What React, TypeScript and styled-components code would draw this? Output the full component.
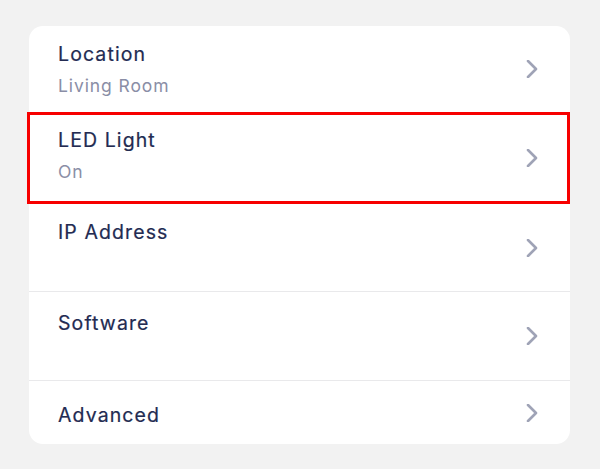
import React from "react";
import styled, { createGlobalStyle, css } from "styled-components";

const GlobalStyle = createGlobalStyle`
  html, body {
    margin: 0;
    padding: 0;
    background: #f2f2f2;
    font-family: "Inter", "Liberation Sans", sans-serif;
  }
  * { box-sizing: border-box; }
`;

const Page = styled.div`
  width: 600px;
  height: 469px;
  padding: 26px 30px 25px 29px;
`;

const Card = styled.div`
  background: #ffffff;
  border-radius: 14px;
  display: flex;
  flex-direction: column;
  height: 418px;
`;

const Row = styled.div<{ $h: number; $pt: number; $divider?: boolean; $highlight?: boolean }>`
  position: relative;
  height: ${(p) => p.$h}px;
  display: flex;
  align-items: center;
  padding: 0 32px 0 29px;
  ${(p) =>
    p.$divider &&
    css`
      border-bottom: 1px solid #e9e9eb;
    `}
  ${(p) =>
    p.$highlight &&
    css`
      &::after {
        content: "";
        position: absolute;
        top: 0;
        bottom: 0;
        left: -2px;
        right: 0;
        border: 3px solid #f70000;
        pointer-events: none;
      }
    `}
  & > div:first-child {
    padding-top: ${(p) => p.$pt}px;
  }
`;

const TextCol = styled.div`
  flex: 1;
  align-self: stretch;
  display: flex;
  flex-direction: column;
`;

const Title = styled.div`
  font-size: 19.5px;
  line-height: 24px;
  color: #232b52;
  font-weight: 400;
  letter-spacing: 1.1px;
  -webkit-text-stroke: 0.2px #232b52;
`;

const Subtitle = styled.div`
  margin-top: 9px;
  font-size: 17.5px;
  line-height: 22px;
  color: #8a8ea6;
  letter-spacing: 0.9px;
`;

const Chevron = styled.svg`
  width: 12px;
  height: 18px;
  flex: none;
`;

const ChevronIcon = () => (
  <Chevron viewBox="0 0 12 18">
    <polyline
      points="2,1 10,9 2,17"
      fill="none"
      stroke="#9fa3b6"
      strokeWidth="2.6"
      strokeLinecap="round"
      strokeLinejoin="round"
    />
  </Chevron>
);

type Item = {
  title: string;
  subtitle?: string;
  h: number;
  pt: number;
  divider?: boolean;
  highlight?: boolean;
};

const items: Item[] = [
  { title: "Location", subtitle: "Living Room", h: 86, pt: 16 },
  { title: "LED Light", subtitle: "On", h: 92, pt: 16, highlight: true },
  { title: "IP Address", h: 88, pt: 16, divider: true },
  { title: "Software", h: 89, pt: 19, divider: true },
  { title: "Advanced", h: 63, pt: 22 },
];

export default function App() {
  return (
    <>
      <GlobalStyle />
      <Page>
        <Card>
          {items.map((it) => (
            <Row key={it.title} $h={it.h} $pt={it.pt} $divider={it.divider} $highlight={it.highlight}>
              <TextCol>
                <Title>{it.title}</Title>
                {it.subtitle && <Subtitle>{it.subtitle}</Subtitle>}
              </TextCol>
              <ChevronIcon />
            </Row>
          ))}
        </Card>
      </Page>
    </>
  );
}
